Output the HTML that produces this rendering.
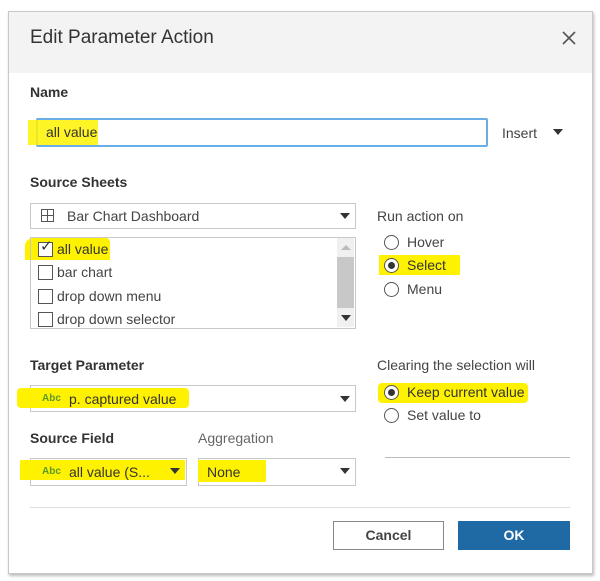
<!DOCTYPE html><html><head><style>
body{margin:0;width:600px;height:581px;background:#fff;font-family:"Liberation Sans",sans-serif;color:#333;position:relative;overflow:hidden}
.a{position:absolute}
.dlg{left:8px;top:11px;width:583px;height:561px;border:1px solid #c8c8c8;box-shadow:1px 2px 3px #bbb;background:#fff}
.hdr{left:9px;top:12px;width:583px;height:61px;background:#f3f3f3}
.lbl{font-size:14px;font-weight:bold;color:#333}
.t{font-size:14px;color:#444;white-space:nowrap}
.box{border:1px solid #c8c8c8;background:#fff}
.hl{background:#fff200}
.arr{width:0;height:0;border-left:5px solid transparent;border-right:5px solid transparent;border-top:6px solid #333}
.cb{width:13px;height:13px;border:1px solid #555;background:#fff}
.rd{width:13px;height:13px;border:1px solid #555;border-radius:50%;background:#fff}
.rd.on::after{content:"";position:absolute;left:3px;top:3px;width:7px;height:7px;border-radius:50%;background:#333}
.abc{font-size:10px;color:#5a9a2a;font-weight:bold}
</style></head><body>
<div class="a dlg"></div>
<div class="a hdr"></div>
<div class="a" style="left:30px;top:27px;font-size:19px;color:#333">Edit Parameter Action</div>
<svg class="a" style="left:562px;top:31px" width="14" height="14"><path d="M1 1L13 13M13 1L1 13" stroke="#555" stroke-width="1.6"/></svg>

<div class="a lbl" style="left:30px;top:84px">Name</div>
<div class="a" style="left:36px;top:118px;width:448px;height:25px;border:2px solid #6aaee8;border-radius:2px"></div>
<div class="a hl" style="left:28px;top:120px;width:70px;height:25px;opacity:.85"></div>
<div class="a t" style="left:46px;top:124px;color:#333">all value</div>
<div class="a t" style="left:502px;top:125px">Insert</div>
<div class="a arr" style="left:553px;top:129px"></div>

<div class="a lbl" style="left:30px;top:174px">Source Sheets</div>
<div class="a box" style="left:30px;top:203px;width:324px;height:24px"></div>
<svg class="a" style="left:41px;top:209px" width="13" height="13"><rect x="0.5" y="0.5" width="12" height="12" fill="none" stroke="#555"/><path d="M6.5 0v13M0 6.5h13" stroke="#555"/></svg>
<div class="a t" style="left:67px;top:208px">Bar Chart Dashboard</div>
<div class="a arr" style="left:340px;top:213px"></div>

<div class="a hl" style="left:25px;top:238px;width:85px;height:22px;border-radius:8px 4px 0 0"></div>
<div class="a box" style="left:30px;top:237px;width:324px;height:90px;background:transparent"></div>
<div class="a" style="left:337px;top:238px;width:17px;height:89px;background:#f0f0f0"></div>
<div class="a" style="left:337px;top:257px;width:17px;height:51px;background:#c8c8c8"></div>
<div class="a" style="left:341px;top:245px;width:0;height:0;border-left:5px solid transparent;border-right:5px solid transparent;border-bottom:5px solid #bbb"></div>
<div class="a arr" style="left:341px;top:315px"></div>
<div class="a cb" style="left:38px;top:242px"></div><div class="a" style="left:40px;top:237px;font-size:15px;color:#333">✓</div>
<div class="a t" style="left:57px;top:241px;color:#333">all value</div>
<div class="a cb" style="left:38px;top:265px"></div><div class="a t" style="left:57px;top:264px">bar chart</div>
<div class="a cb" style="left:38px;top:289px"></div><div class="a t" style="left:57px;top:288px">drop down menu</div>
<div class="a cb" style="left:38px;top:312px"></div><div class="a t" style="left:57px;top:311px">drop down selector</div>

<div class="a t" style="left:377px;top:208px">Run action on</div>
<div class="a rd" style="left:384px;top:235px"></div><div class="a t" style="left:407px;top:234px">Hover</div>
<div class="a hl" style="left:379px;top:255px;width:81px;height:20px"></div>
<div class="a rd on" style="left:384px;top:258px"></div><div class="a t" style="left:407px;top:257px;color:#333">Select</div>
<div class="a rd" style="left:384px;top:282px"></div><div class="a t" style="left:407px;top:281px">Menu</div>

<div class="a lbl" style="left:30px;top:357px">Target Parameter</div>
<div class="a box" style="left:30px;top:385px;width:324px;height:25px"></div>
<div class="a hl" style="left:17px;top:388px;width:172px;height:20px;border-radius:4px"></div>
<div class="a abc" style="left:42px;top:393px">Abc</div>
<div class="a t" style="left:69px;top:391px;color:#333">p. captured value</div>
<div class="a arr" style="left:340px;top:396px"></div>

<div class="a t" style="left:377px;top:357px">Clearing the selection will</div>
<div class="a hl" style="left:378px;top:383px;width:150px;height:20px;border-radius:4px"></div>
<div class="a rd on" style="left:384px;top:385px"></div><div class="a t" style="left:407px;top:384px;color:#333">Keep current value</div>
<div class="a rd" style="left:384px;top:408px"></div><div class="a t" style="left:407px;top:407px">Set value to</div>

<div class="a lbl" style="left:30px;top:430px">Source Field</div>
<div class="a t" style="left:198px;top:430px;color:#666">Aggregation</div>
<div class="a box" style="left:30px;top:458px;width:155px;height:26px"></div>
<div class="a hl" style="left:20px;top:460px;width:165px;height:20px"></div>
<div class="a abc" style="left:42px;top:466px">Abc</div>
<div class="a t" style="left:69px;top:464px;color:#333">all value (S...</div>
<div class="a arr" style="left:170px;top:468px"></div>
<div class="a box" style="left:198px;top:458px;width:156px;height:26px"></div>
<div class="a hl" style="left:198px;top:460px;width:68px;height:22px"></div>
<div class="a t" style="left:207px;top:464px;color:#333">None</div>
<div class="a arr" style="left:340px;top:468px"></div>
<div class="a" style="left:385px;top:457px;width:185px;height:1px;background:#bbb"></div>

<div class="a" style="left:30px;top:507px;width:540px;height:1px;background:#ddd"></div>
<div class="a" style="left:333px;top:521px;width:109px;height:27px;border:1px solid #888;background:#fff;font-size:14px;font-weight:bold;text-align:center;line-height:27px;color:#444">Cancel</div>
<div class="a" style="left:458px;top:521px;width:112px;height:29px;background:#1f6aa5;font-size:14px;font-weight:bold;text-align:center;line-height:29px;color:#fff">OK</div>
</body></html>
